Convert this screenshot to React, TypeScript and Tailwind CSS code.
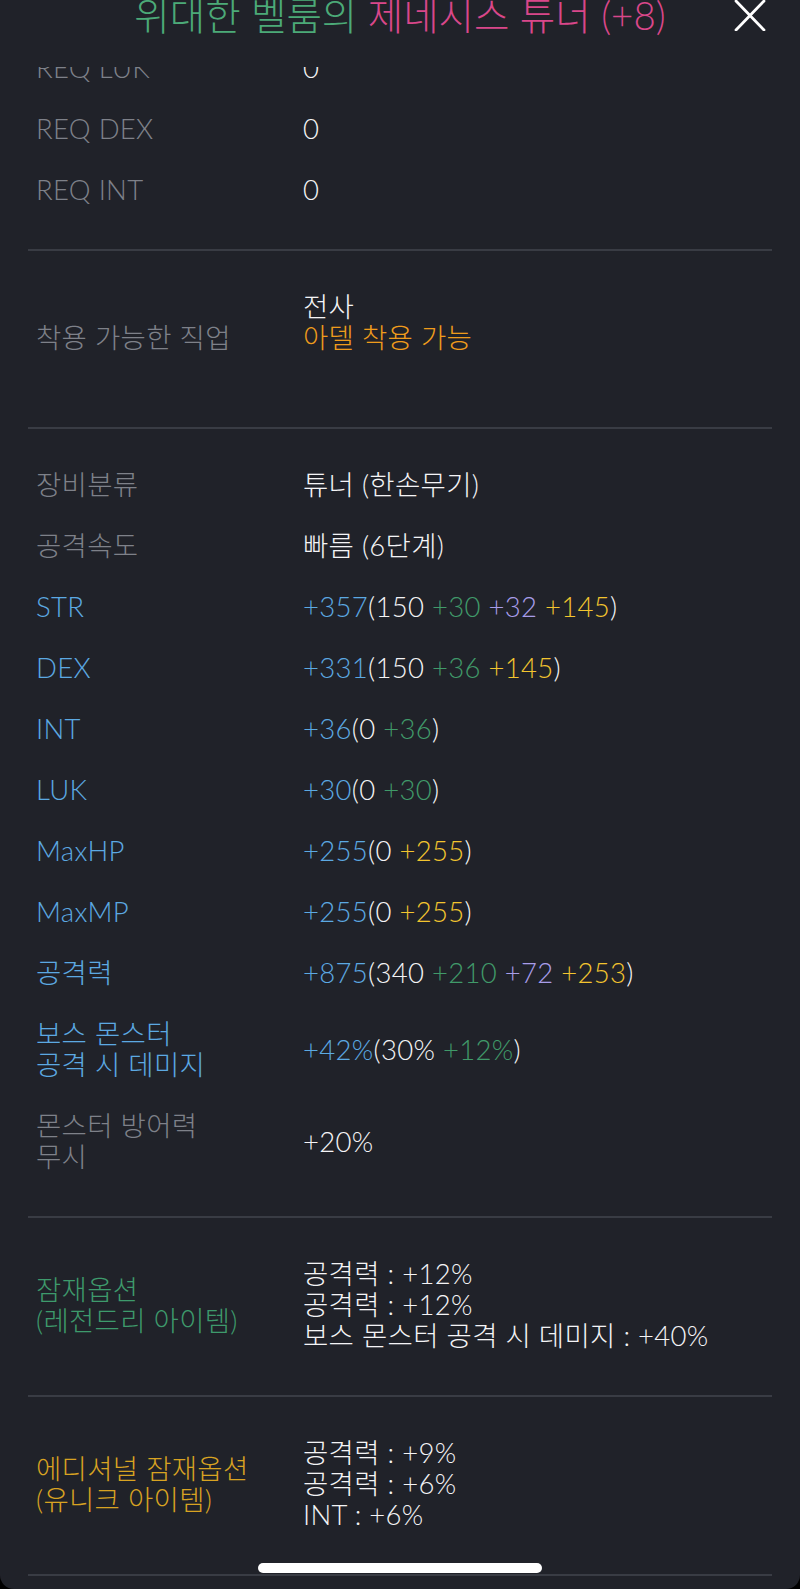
import React from 'react';

type Seg = { t: string; c: string };

const C = {
    white: 'text-[#f4f4f6]',
    gray: 'text-[#7e8189]',
    blue: 'text-[#5ca9e2]',
    green: 'text-[#409a69]',
    purple: 'text-[#a89de9]',
    yellow: 'text-[#f3c52f]',
    orange: 'text-[#ef9c1c]',
    gold: 'text-[#d8a322]',
    potential: 'text-[#3e9a6c]',
};

type Row = {
    label: string[];
    labelColor: string;
    lines: Seg[][];
    blankLine?: boolean;
};

const stat = (...segs: [string, string][]): Seg[][] => [segs.map(([t, c]) => ({ t, c }))];
const plain = (...lines: string[]): Seg[][] => lines.map((t) => [{ t, c: C.white }]);

const sections: Row[][] = [
    [
        { label: ['REQ LUK'], labelColor: C.gray, lines: plain('0') },
        { label: ['REQ DEX'], labelColor: C.gray, lines: plain('0') },
        { label: ['REQ INT'], labelColor: C.gray, lines: plain('0') },
    ],
    [
        {
            label: ['착용 가능한 직업'],
            labelColor: C.gray,
            lines: [[{ t: '전사', c: C.white }], [{ t: '아델 착용 가능', c: C.orange }]],
            blankLine: true,
        },
    ],
    [
        { label: ['장비분류'], labelColor: C.gray, lines: plain('튜너 (한손무기)') },
        { label: ['공격속도'], labelColor: C.gray, lines: plain('빠름 (6단계)') },
        {
            label: ['STR'],
            labelColor: C.blue,
            lines: stat(['+357', C.blue], ['(150 ', C.white], ['+30 ', C.green], ['+32 ', C.purple], ['+145', C.yellow], [')', C.white]),
        },
        {
            label: ['DEX'],
            labelColor: C.blue,
            lines: stat(['+331', C.blue], ['(150 ', C.white], ['+36 ', C.green], ['+145', C.yellow], [')', C.white]),
        },
        {
            label: ['INT'],
            labelColor: C.blue,
            lines: stat(['+36', C.blue], ['(0 ', C.white], ['+36', C.green], [')', C.white]),
        },
        {
            label: ['LUK'],
            labelColor: C.blue,
            lines: stat(['+30', C.blue], ['(0 ', C.white], ['+30', C.green], [')', C.white]),
        },
        {
            label: ['MaxHP'],
            labelColor: C.blue,
            lines: stat(['+255', C.blue], ['(0 ', C.white], ['+255', C.yellow], [')', C.white]),
        },
        {
            label: ['MaxMP'],
            labelColor: C.blue,
            lines: stat(['+255', C.blue], ['(0 ', C.white], ['+255', C.yellow], [')', C.white]),
        },
        {
            label: ['공격력'],
            labelColor: C.blue,
            lines: stat(['+875', C.blue], ['(340 ', C.white], ['+210 ', C.green], ['+72 ', C.purple], ['+253', C.yellow], [')', C.white]),
        },
        {
            label: ['보스 몬스터', '공격 시 데미지'],
            labelColor: C.blue,
            lines: stat(['+42%', C.blue], ['(30% ', C.white], ['+12%', C.green], [')', C.white]),
        },
        { label: ['몬스터 방어력', '무시'], labelColor: C.gray, lines: plain('+20%') },
    ],
    [
        {
            label: ['잠재옵션', '(레전드리 아이템)'],
            labelColor: C.potential,
            lines: plain('공격력 : +12%', '공격력 : +12%', '보스 몬스터 공격 시 데미지 : +40%'),
        },
    ],
    [
        {
            label: ['에디셔널 잠재옵션', '(유니크 아이템)'],
            labelColor: C.gold,
            lines: plain('공격력 : +9%', '공격력 : +6%', 'INT : +6%'),
        },
    ],
];

const ItemRow: React.FC<{ row: Row }> = ({ row }) => (
    <div className="grid grid-cols-[267px_1fr] items-center pl-[8px] py-[15px] leading-[31px]">
        <div className={row.labelColor}>
            {row.label.map((l) => (
                <div key={l}>{l}</div>
            ))}
        </div>
        <div>
            {row.lines.map((segs, i) => (
                <div key={i}>
                    {segs.map((s, j) => (
                        <span key={j} className={s.c}>
                            {s.t}
                        </span>
                    ))}
                </div>
            ))}
            {row.blankLine && <div className="h-[30px]" />}
        </div>
    </div>
);

const App: React.FC = () => {
    return (
        <div className="min-h-screen bg-black">
            <div
                className="relative h-[1589px] bg-[#202229] rounded-b-[14px] overflow-hidden flex flex-col text-[27.5px] font-light tracking-[0.3px]"
                style={{ fontFamily: "Lato, 'Noto Sans CJK KR', sans-serif" }}
            >
                {/* Header - title scrolled partly out of view */}
                <div className="relative h-[67px] shrink-0 overflow-hidden">
                    <div className="-mt-[4px] text-center text-[38.5px] leading-[38px] tracking-normal">
                        <span className="text-[#4caa78]">위대한 벨룸의 </span>
                        <span className="text-[#d9478a]">제네시스 튜너 (+8)</span>
                    </div>
                    <button className="absolute right-[34px] top-0 w-[32px] h-[31px]">
                        <svg viewBox="0 0 32 31" className="w-[32px] h-[31px]" stroke="#ffffff" strokeWidth="2.8" strokeLinecap="round">
                            <line x1="2" y1="1" x2="30" y2="30" />
                            <line x1="30" y1="1" x2="2" y2="30" />
                        </svg>
                    </button>
                </div>

                {/* Scrolled detail list */}
                <div className="flex-1 overflow-hidden">
                    <div className="-mt-[30px] mx-[28px]">
                        {sections.map((rows, i) => (
                            <div key={i} className={`${i === 0 ? 'pt-0' : 'pt-[25px]'} pb-[29px] border-b-2 border-[#393c44]`}>
                                {rows.map((row) => (
                                    <ItemRow key={row.label.join()} row={row} />
                                ))}
                            </div>
                        ))}
                    </div>
                </div>

                {/* Home indicator */}
                <div className="absolute left-[258px] bottom-[16px] w-[284px] h-[10px] rounded-full bg-white" />
            </div>
        </div>
    );
};

export default App;
